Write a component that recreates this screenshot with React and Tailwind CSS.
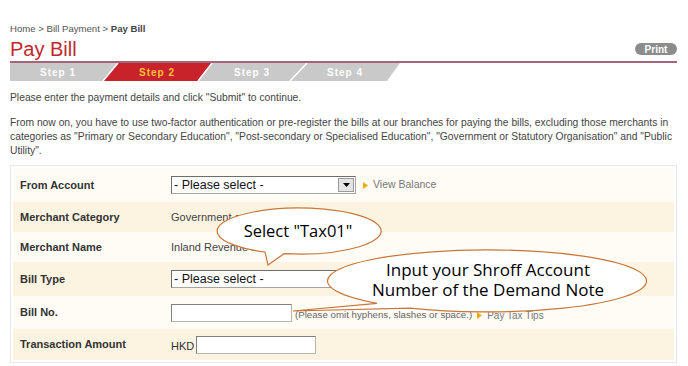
import React from 'react'

const ROWS_BG_LIGHT = 'bg-[#fffcf6]'
const ROWS_BG_CREAM = 'bg-[#fcf3e1]'

function SelectBox({ width, top }) {
  return (
    <div
      className={`flex h-[18px] items-center justify-between border border-[#a5a5a5] border-t-[#6e6e6e] border-l-[#6e6e6e] bg-white ${width}`}
    >
      <span className="pl-[2px] text-[12.5px] leading-none text-[#111]">- Please select -</span>
      {top && (
        <span className="mr-[1px] flex h-[14px] w-[16px] items-center justify-center border border-[#9a9a9a] bg-[#e4e4e4]">
          <svg width="7" height="4" viewBox="0 0 7 4">
            <path d="M0 0h7L3.5 4z" fill="#000" />
          </svg>
        </span>
      )}
    </div>
  )
}

function Arrow() {
  return (
    <svg width="5" height="7" viewBox="0 0 5 7" className="mr-[5px]">
      <path d="M0 0l5 3.5L0 7z" fill="#f2a900" />
    </svg>
  )
}

function TextBox({ width }) {
  return <div className={`h-[18px] border border-[#b4b4b4] border-t-[#808080] border-l-[#808080] bg-white ${width}`} />
}

function Row({ label, bg, h, children }) {
  return (
    <div className={`flex items-center ${bg} ${h}`}>
      <div className="w-[158px] pl-[7px] text-[11px] font-bold text-[#333]">{label}</div>
      <div className="flex flex-1 items-center text-[11px] text-[#444]">{children}</div>
    </div>
  )
}

export default function App() {
  return (
    <div className="relative h-[366px] w-[688px] overflow-hidden bg-white font-['Liberation_Sans',Arial,sans-serif]">
      <div className="pl-[10px] pr-[11px] pt-[22px]">
        {/* Breadcrumb */}
        <div className="text-[9.6px] leading-[13px] text-[#555]">
          Home &gt; Bill Payment &gt; <span className="font-bold text-[#444]">Pay Bill</span>
        </div>

        {/* Title + print */}
        <div className="mt-[4px] flex h-[22px] items-start justify-between">
          <h1 className="text-[20px] leading-[20px] text-[#c1272d]">Pay Bill</h1>
          <span className="mt-[4px] flex h-[12px] w-[42px] items-center justify-center rounded-full bg-[#8c8c8c] text-[10px] font-bold text-white">
            Print
          </span>
        </div>
        <div className="h-[2px] bg-[#a3647c]" />

        {/* Steps */}
        <div className="relative h-[18px] w-[392px]">
          <svg className="absolute inset-0" width="392" height="18" viewBox="0 0 392 18">
            <path d="M0 0H390L377 18H0z" fill="#c9c9c9" />
            <path d="M108 0H202L188 18H93z" fill="#c8222b" />
            <path d="M108 0L93 18M202 0L188 18M297 0L280 18" stroke="#fff" strokeWidth="1.5" />
          </svg>
          <div className="relative flex h-full items-center text-[10px] font-bold tracking-[1px] text-white">
            <span className="w-[96px] text-center">Step 1</span>
            <span className="w-[102px] text-center text-[#fbc23c]">Step 2</span>
            <span className="w-[88px] text-center">Step 3</span>
            <span className="w-[98px] text-center">Step 4</span>
          </div>
        </div>

        {/* Instructions */}
        <p className="mt-[10px] text-[10.3px] leading-[14px] text-[#444]">
          Please enter the payment details and click "Submit" to continue.
        </p>
        <p className="mt-[11px] text-[10.3px] leading-[14px] text-[#444]">
          From now on, you have to use two-factor authentication or pre-register the bills at our branches for paying the bills, excluding those merchants in categories as "Primary or Secondary Education", "Post-secondary or Specialised Education", "Government or Statutory Organisation" and "Public Utility".
        </p>

        {/* Form table */}
        <div className="mt-[7px] border border-[#e8e8e8] p-[2px]">
          <Row label="From Account" bg={ROWS_BG_LIGHT} h="h-[34px]">
            <SelectBox width="w-[185px]" top />
            <span className="ml-[7px] flex items-center text-[10.5px] text-[#777]">
              <Arrow />
              View Balance
            </span>
          </Row>
          <Row label="Merchant Category" bg={ROWS_BG_CREAM} h="h-[30px]">
            Government or Statutory Organisation
          </Row>
          <Row label="Merchant Name" bg={ROWS_BG_LIGHT} h="h-[30px]">
            Inland Revenue Department
          </Row>
          <Row label="Bill Type" bg={ROWS_BG_CREAM} h="h-[34px]">
            <SelectBox width="w-[300px]" />
          </Row>
          <Row label="Bill No." bg={ROWS_BG_LIGHT} h="h-[33px]">
            <TextBox width="w-[121px]" />
            <span className="ml-[3px] mt-[6px] text-[9.7px] text-[#666]">(Please omit hyphens, slashes or space.)</span>
            <span className="ml-[5px] mt-[6px] flex items-center text-[10px] text-[#777]">
              <Arrow />
              Pay Tax Tips
            </span>
          </Row>
          <Row label="Transaction Amount" bg={ROWS_BG_CREAM} h="h-[31px]">
            <span className="mr-[2px] mt-[3px] text-[11px] text-[#333]">HKD</span>
            <TextBox width="w-[120px]" />
          </Row>
        </div>
      </div>

      {/* Callout bubbles */}
      <svg className="pointer-events-none absolute inset-0" width="688" height="366" viewBox="0 0 688 366">
        <path
          d="M265 252A82 23 0 1 1 284 253.7L268 265Z"
          fill="#fff"
          stroke="#c8763a"
          strokeWidth="1.2"
        />
        <path
          d="M377 303.4A159.5 31 0 1 1 410 308.1L293 311Z"
          fill="#fff"
          stroke="#c8763a"
          strokeWidth="1.2"
        />
      </svg>
      <div className="pointer-events-none absolute left-[216px] top-[220px] w-[164px] text-center font-['Open_Sans',sans-serif] text-[16.5px] leading-[22px] text-black">
        Select "Tax01"
      </div>
      <div className="pointer-events-none absolute left-[328px] top-[260px] w-[320px] text-center font-['Open_Sans',sans-serif] text-[17px] leading-[20px] text-black">
        Input your Shroff Account
        <br />
        Number of the Demand Note
      </div>
    </div>
  )
}
